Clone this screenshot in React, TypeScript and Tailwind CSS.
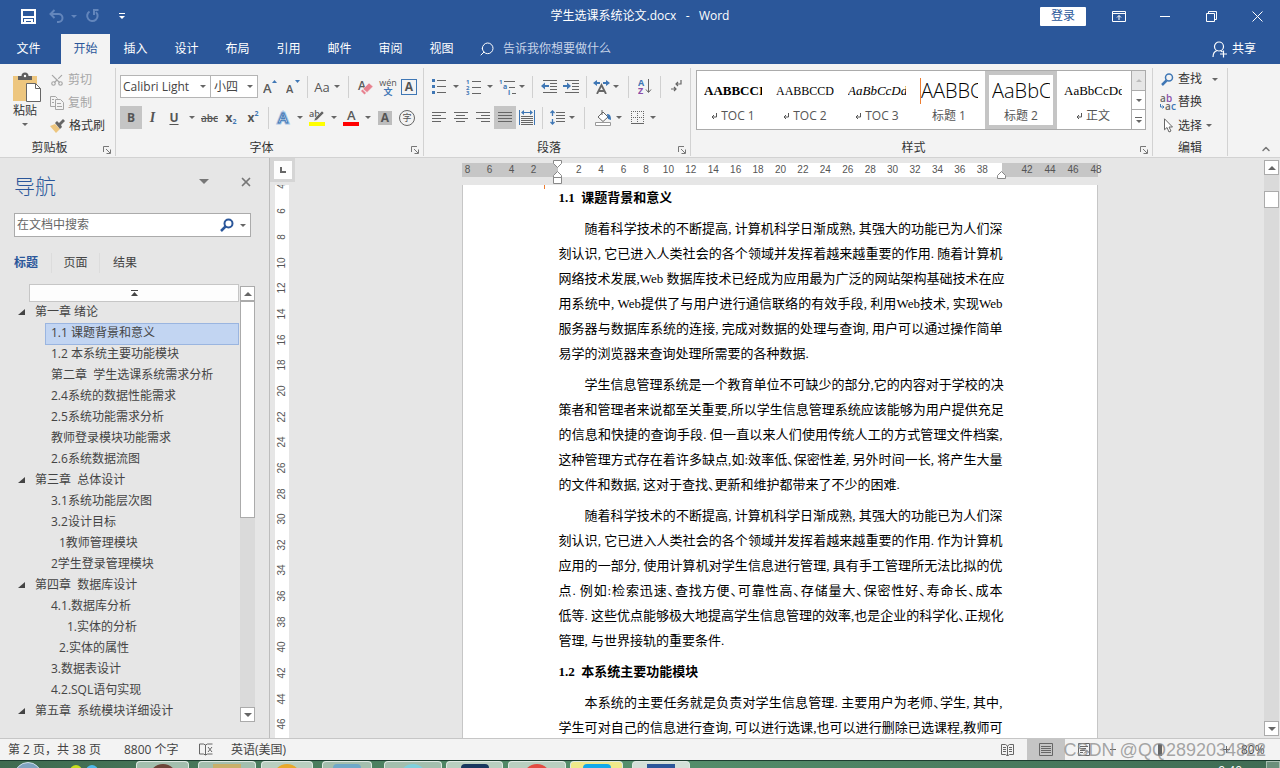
import React from 'react';
import { Search, Scissors, ChevronUp, X } from 'lucide-react';

const BLUE = '#3f77b5';
const GRAY = '#666';

interface BoxProps {
  w: string;
  label?: string;
  className?: string;
  children?: React.ReactNode;
}

const Tool: React.FC<BoxProps> = ({ w, label, className = '', children }) => (
  <button
    type="button"
    aria-label={label}
    className={`flex h-[23px] shrink-0 items-center justify-center whitespace-nowrap text-[#555] ${w} ${className}`}
  >
    {children}
  </button>
);

const Caret: React.FC<{ className?: string; fill?: string }> = ({ className = '', fill = '#666' }) => (
  <svg width="6" height="3" viewBox="0 0 6 3" className={`shrink-0 ${className}`}>
    <path d="M0 0h6L3 3z" fill={fill} />
  </svg>
);

const ScrollArrow: React.FC<{ down?: boolean }> = ({ down }) => (
  <svg width="8" height="4" viewBox="0 0 8 4">
    <path d={down ? 'M0 0h8L4 4z' : 'M0 4h8L4 0z'} fill="#666" />
  </svg>
);

const Sep: React.FC<{ w: string }> = ({ w }) => (
  <div className={`flex shrink-0 justify-center ${w}`}>
    <div className="h-[22px] w-px bg-[#d0d0d0]" />
  </div>
);

// horizontal strokes used by the list and alignment icons
const Lines: React.FC<{ rows: number[][]; color?: string }> = ({ rows, color = GRAY }) => (
  <>
    {rows.map(([x, y, w]) => (
      <rect key={`${x}-${y}`} x={x} y={y} width={w} height="1" fill={color} />
    ))}
  </>
);

const Group: React.FC<{ name: string; w: string; launcher?: boolean; children: React.ReactNode }> = ({
  name,
  w,
  launcher = true,
  children,
}) => (
  <section className={`my-1 flex shrink-0 flex-col border-r border-[#d2d2d2] ${w}`} aria-label={name}>
    <div className="h-[70px]">{children}</div>
    <div className="flex h-[18px] items-center pt-[2px]">
      <span className={`flex-1 text-center text-[#333] ${launcher ? 'pr-1' : ''}`}>{name}</span>
      {launcher && (
        <button type="button" aria-label={`${name}设置`} className="w-3 pt-1">
          <svg width="8" height="8" viewBox="0 0 8 8" fill="none" stroke="#777">
            <path d="M.5 6V.5H6M3 3l4 4M7.500 3.500v4h-4" />
          </svg>
        </button>
      )}
    </div>
  </section>
);

const TitleBar: React.FC = () => (
  <div className="flex h-8 items-center text-white">
    <div className="flex flex-1 items-center">
      <button type="button" aria-label="保存" className="ml-[21px] w-7">
        <svg width="15" height="15" viewBox="0 0 15 15" fill="none" stroke="#fff" strokeWidth="2">
          <path d="M1 1h13v13H1zM2 8h11" />
          <path d="M4 14v-3h7v3" />
        </svg>
      </button>
      <button type="button" aria-label="撤消" className="flex w-9 items-center gap-[7px]">
        <svg width="15" height="14" viewBox="0 0 15 14" fill="none" stroke="#6386bc" strokeWidth="2">
          <path d="M5.500 1L1.500 5l4 4M2 5h7.500a4 4 0 010 8H8" />
        </svg>
        <Caret fill="#6386bc" />
      </button>
      <button type="button" aria-label="恢复" className="w-[34px]">
        <svg width="15" height="14" viewBox="0 0 15 14" fill="none" stroke="#6386bc" strokeWidth="2">
          <path d="M4.500 2.500a5.200 5.200 0 106.500.6M8 1h5.500M9 0v6" />
        </svg>
      </button>
      <button type="button" aria-label="自定义快速访问工具栏" className="flex flex-col items-center gap-[2px]">
        <span className="h-px w-[6px] bg-white" />
        <Caret fill="#fff" />
      </button>
    </div>
    <h1 className="whitespace-pre text-[12px]">学生选课系统论文.docx   -   Word</h1>
    <div className="flex flex-1 items-center justify-end">
      <button type="button" className="mr-[10px] h-[19px] w-[46px] rounded-[1px] bg-white text-[#2b579a]">
        登录
      </button>
      <button type="button" aria-label="功能区显示选项" className="flex w-[46px] justify-center">
        <svg width="14" height="11" viewBox="0 0 14 11" fill="none" stroke="#fff">
          <path d="M.5.5h13v10H.5zM.5 2.500h13M7 9V4.500M5 6.500l2-2 2 2" />
        </svg>
      </button>
      <button type="button" aria-label="最小化" className="flex w-[46px] items-center justify-center">
        <span className="h-px w-[10px] bg-white" />
      </button>
      <button type="button" aria-label="还原" className="flex w-[46px] justify-center">
        <svg width="11" height="11" viewBox="0 0 11 11" fill="none" stroke="#fff">
          <path d="M.5 2.500h8v8h-8zM2.500 2.500v-2h8v8h-2" />
        </svg>
      </button>
      <button type="button" aria-label="关闭" className="flex w-[46px] justify-center">
        <svg width="11" height="11" viewBox="0 0 11 11" fill="none" stroke="#fff">
          <path d="M.5.5l10 10M10.500.5l-10 10" />
        </svg>
      </button>
    </div>
  </div>
);

const TABS = ['插入', '设计', '布局', '引用', '邮件', '审阅', '视图'];

const TabBar: React.FC = () => (
  <nav className="flex h-8 items-end text-white">
    <button type="button" className="h-[30px] w-[61px] pr-1 text-center">
      文件
    </button>
    <button type="button" className="h-[30px] w-[49px] bg-[#f3f3f3] text-[#2b579a]">
      开始
    </button>
    {TABS.map((tab) => (
      <button key={tab} type="button" className="h-[30px] w-[51px]">
        {tab}
      </button>
    ))}
    <label className="ml-3 flex h-[30px] items-center gap-2">
      <Search size={16} strokeWidth={1.500} className="-scale-x-100" />
      <input
        className="w-40 bg-transparent text-[12px] outline-none placeholder:text-[#c8d4e8]"
        placeholder="告诉我你想要做什么"
      />
    </label>
    <button type="button" className="ml-auto mr-6 flex h-[30px] items-center gap-1">
      <svg width="16" height="17" viewBox="0 0 16 17" fill="none" stroke="#fff" strokeWidth="1.200">
        <circle cx="7" cy="5.500" r="4.500" />
        <path d="M1 16c0-4 2-6 4.500-6.500M8.500 9.500l2 1.500M8 13h7M11.500 9.500v7" />
      </svg>
      共享
    </button>
  </nav>
);

const ClipboardGroup: React.FC = () => (
  <Group name="剪贴板" w="w-[116px]">
    <div className="flex">
      <button type="button" className="flex w-[50px] flex-col items-center pt-1">
        <svg width="30" height="31" viewBox="0 0 30 31" className="ml-1">
          <path d="M1 4h24v25H1z" fill="#edc67f" />
          <path d="M6 4h3.500a3.500 3.500 0 017 0H20v4H6z" fill="#5f5f5f" />
          <circle cx="13" cy="4" r="1.200" fill="#fff" />
          <path d="M14.500 11.500h9l5 5v13h-14z" fill="#fff" stroke="#666" />
          <path d="M23.500 11.500v5h5" fill="none" stroke="#666" />
        </svg>
        <span className="leading-4 text-[#333]">粘贴</span>
        <Caret className="mt-1" />
      </button>
      <div className="flex flex-col text-[#a6a6a6]">
        <button type="button" className="flex h-[23px] items-center gap-1">
          <Scissors size={14} className="-rotate-90" />
          剪切
        </button>
        <button type="button" className="flex h-[23px] items-center gap-1">
          <svg width="14" height="14" viewBox="0 0 14 14" fill="none" stroke="#a6a6a6">
            <path d="M5 10.500H.5V.5h5l2 2M5.500 3.500h5l3 3v7h-8zM2 3.500h2M2 6.500h2M7 7.500h4M7 10.500h5" />
          </svg>
          复制
        </button>
        <button type="button" className="flex h-[23px] items-center gap-1 text-[#333]">
          <svg width="15" height="14" viewBox="0 0 15 14">
            <path d="M0 7l5-2 5 5-4 4z" fill="#edc67f" />
            <path d="M5 4l2-2 2 2 4-4 2 2-4 4 1 2-2 2z" fill="#666" />
          </svg>
          格式刷
        </button>
      </div>
    </div>
  </Group>
);

const FontGroup: React.FC = () => (
  <Group name="字体" w="w-[308px]">
    <div className="flex items-center pl-1 pt-[7px]">
      <div className="grid h-[23px] w-[91px] items-center border border-[#b5b5b5] bg-white">
        <select aria-label="字体" className="col-start-1 row-start-1 appearance-none bg-transparent pl-[2px] text-[12px] text-[#444]">
          <option>Calibri Light</option>
        </select>
        <Caret className="col-start-1 row-start-1 mr-1 justify-self-end" />
      </div>
      <div className="grid h-[23px] w-[47px] items-center border border-l-0 border-[#b5b5b5] bg-white">
        <select aria-label="字号" className="col-start-1 row-start-1 appearance-none bg-transparent pl-[3px] text-[12px] text-[#444]">
          <option>小四</option>
        </select>
        <Caret className="col-start-1 row-start-1 mr-1 justify-self-end" />
      </div>
      <Tool w="w-6" label="增大字号">
        <svg width="14" height="16" viewBox="0 0 14 16">
          <text x="0" y="14" fontSize="13" fontWeight="600" fill="#5a5a5a">A</text>
          <path d="M9 4h5l-2.500-3z" fill={BLUE} />
        </svg>
      </Tool>
      <Tool w="w-[22px]" label="减小字号">
        <svg width="14" height="16" viewBox="0 0 14 16">
          <text x="0" y="14" fontSize="11" fontWeight="600" fill="#5a5a5a">A</text>
          <path d="M9 1h5l-2.500 3z" fill={BLUE} />
        </svg>
      </Tool>
      <Sep w="w-[6px]" />
      <Tool w="w-[34px]" label="更改大小写" className="gap-1 text-[13px]">
        Aa <Caret />
      </Tool>
      <Sep w="w-2" />
      <Tool w="w-[26px]" label="清除所有格式">
        <svg width="16" height="16" viewBox="0 0 16 16">
          <text x="1" y="11" fontSize="12" fontWeight="600" fill="#5a5a5a">A</text>
          <path d="M6 10l6-6 4 3.500-6 6z" fill="#e8818f" stroke="#f3f3f3" strokeWidth=".5" />
          <path d="M4 12l1.500-1.500L9 14 7.500 15.500z" fill="#e8818f" />
        </svg>
      </Tool>
      <Tool w="w-5" label="拼音指南" className="flex-col">
        <span className="text-[9px] leading-[9px]">wén</span>
        <span className="text-[9px] font-bold leading-[9px] text-[#3f77b5]">文</span>
      </Tool>
      <Tool w="w-[22px]" label="字符边框">
        <span className="h-4 w-4 border border-[#3f77b5] text-[12px] font-bold leading-[14px]">A</span>
      </Tool>
    </div>
    <div className="flex items-center pl-1 pt-2">
      <Tool w="w-[22px]" className="bg-[#c5c5c5] text-[12px] font-bold">B</Tool>
      <Tool w="w-[21px]" className="font-['Liberation_Serif'] text-[14px] font-bold italic">I</Tool>
      <Tool w="w-[22px]" className="text-[12px] font-bold underline underline-offset-2">U</Tool>
      <Tool w="w-[14px]" label="下划线选项"><Caret /></Tool>
      <Tool w="w-[21px]" className="text-[10px] font-semibold line-through">abc</Tool>
      <Tool w="w-[22px]" label="下标" className="font-bold">
        x<span className="mt-2 text-[7px] text-[#3f77b5]">2</span>
      </Tool>
      <Tool w="w-[22px]" label="上标" className="font-bold">
        x<span className="mb-2 text-[7px] text-[#3f77b5]">2</span>
      </Tool>
      <Sep w="w-2" />
      <Tool w="w-[22px]" label="文本效果">
        <svg width="16" height="16" viewBox="0 0 16 16">
          <text x="3" y="13" fontSize="15" fontWeight="600" fill="#fff" stroke="#a9c6e6" strokeWidth="3">A</text>
          <text x="3" y="13" fontSize="15" fontWeight="600" fill="#fff" stroke={BLUE}>A</text>
        </svg>
      </Tool>
      <Tool w="w-3" label="文本效果选项"><Caret /></Tool>
      <Tool w="w-[22px]" label="突出显示">
        <svg width="16" height="17" viewBox="0 0 16 17">
          <text x="0" y="8" fontSize="9" fontWeight="600" fill="#5a5a5a">ab</text>
          <path d="M5 12l1-3 7-7 2 2-7 7z" fill="#666" stroke="#f3f3f3" strokeWidth=".5" />
          <path d="M0 13h16v4H0z" fill="#ff0" />
        </svg>
      </Tool>
      <Tool w="w-3" label="突出显示颜色"><Caret /></Tool>
      <Tool w="w-[22px]" label="字体颜色">
        <svg width="16" height="17" viewBox="0 0 16 17">
          <text x="4" y="11" fontSize="13" fontWeight="600" fill="#5a5a5a">A</text>
          <path d="M0 13h16v4H0z" fill="#f00" />
        </svg>
      </Tool>
      <Tool w="w-3" label="字体颜色选项"><Caret /></Tool>
      <Tool w="w-[22px]" label="字符底纹">
        <span className="h-[14px] w-[14px] bg-[#bdbdbd] text-[12px] font-bold leading-[14px]">A</span>
      </Tool>
      <Tool w="w-[22px]" label="带圈字符">
        <span className="h-4 w-4 rounded-full border border-[#666] text-[9px] leading-[14px]">字</span>
      </Tool>
    </div>
  </Group>
);

const ParagraphGroup: React.FC = () => (
  <Group name="段落" w="w-[267px]">
    <div className="flex items-center pl-1 pt-[7px]">
      <Tool w="w-[22px]" label="项目符号">
        <svg width="14" height="15" viewBox="0 0 14 15">
          <path d="M0 0h3v3H0zM0 6h3v3H0zM0 12h3v3H0z" fill={BLUE} />
          <Lines rows={[[5, 1, 9], [5, 7, 9], [5, 13, 9]]} />
        </svg>
      </Tool>
      <Tool w="w-3" label="项目符号库"><Caret /></Tool>
      <Tool w="w-[22px]" label="编号">
        <svg width="15" height="16" viewBox="0 0 15 16">
          <text x="0" y="5" fontSize="6" fontWeight="700" fill={BLUE}>1</text>
          <text x="0" y="11" fontSize="6" fontWeight="700" fill={BLUE}>2</text>
          <text x="0" y="16" fontSize="6" fontWeight="700" fill={BLUE}>3</text>
          <Lines rows={[[6, 2, 9], [6, 8, 9], [6, 14, 9]]} />
        </svg>
      </Tool>
      <Tool w="w-3" label="编号库"><Caret /></Tool>
      <Tool w="w-[22px]" label="多级列表">
        <svg width="17" height="16" viewBox="0 0 17 16">
          <text x="0" y="5" fontSize="6" fontWeight="700" fill={BLUE}>1</text>
          <text x="4" y="10" fontSize="7" fontWeight="700" fill={BLUE}>a</text>
          <text x="9" y="16" fontSize="7" fontWeight="700" fill={BLUE}>i</text>
          <Lines rows={[[5, 2, 11], [10, 8, 6], [13, 14, 4]]} />
        </svg>
      </Tool>
      <Tool w="w-2" label="列表库"><Caret /></Tool>
      <Sep w="w-3" />
      {['减少缩进量', '增加缩进量'].map((label, i) => (
        <Tool key={label} w="w-[22px]" label={label}>
          <svg width="16" height="13" viewBox="0 0 16 13">
            <Lines rows={[[2, 0, 14], [9, 3, 7], [9, 6, 7], [9, 9, 7], [2, 12, 14]]} />
            <path d={i === 0 ? 'M0 6l4-3.500v2.500h4v2H4v2.500z' : 'M8 6L4 2.500v2.500H0v2h4v2.500z'} fill={BLUE} />
          </svg>
        </Tool>
      ))}
      <Sep w="w-2" />
      <Tool w="w-[22px]" label="中文版式">
        <svg width="17" height="14" viewBox="0 0 17 14">
          <path d="M0 3l4-3v2h3v2H4v2zM17 3l-4-3v2h-3v2h3v2z" fill={BLUE} />
          <path d="M4 14L8.500 5 13 14M5.500 11h6" fill="none" stroke={GRAY} strokeWidth="1.800" />
        </svg>
      </Tool>
      <Tool w="w-2" label="中文版式选项"><Caret /></Tool>
      <Sep w="w-4" />
      <Tool w="w-[18px]" label="排序">
        <svg width="14" height="17" viewBox="0 0 14 17">
          <text x="0" y="8" fontSize="9" fontWeight="700" fill={BLUE}>A</text>
          <text x="0" y="16" fontSize="9" fontWeight="700" fill="#8c4fa8">Z</text>
          <path d="M10.500 1v13M8 11.500l2.500 3 2.500-3" fill="none" stroke={GRAY} />
        </svg>
      </Tool>
      <Sep w="w-3" />
      <Tool w="w-5" label="显示编辑标记">
        <svg width="11" height="13" viewBox="0 0 11 13" fill="none" stroke={GRAY} strokeWidth="1.200">
          <path d="M10 0v4H5M7 2L5 4l2 2M0 9h5M3 7l2 2-2 2" />
        </svg>
      </Tool>
    </div>
    <div className="flex items-center pl-1 pt-2">
      {[
        { label: '左对齐', x: 0 },
        { label: '居中', x: 2 },
        { label: '右对齐', x: 5 },
      ].map(({ label, x }) => (
        <Tool key={label} w="w-[22px]" label={label}>
          <svg width="14" height="11" viewBox="0 0 14 11">
            <Lines rows={[[0, 0, 14], [x, 3, 9], [0, 6, 14], [x, 9, 9]]} />
          </svg>
        </Tool>
      ))}
      <Tool w="w-[22px]" label="两端对齐" className="bg-[#c5c5c5]">
        <svg width="14" height="11" viewBox="0 0 14 11">
          <Lines rows={[[0, 0, 14], [0, 3, 14], [0, 6, 14], [0, 9, 14]]} />
        </svg>
      </Tool>
      <Tool w="w-[22px]" label="分散对齐">
        <svg width="16" height="15" viewBox="0 0 16 15">
          <path d="M0 0h1v15H0zM15 0h1v15h-1zM2 2.500L5 0v2h6V0l3 2.500L11 5V3H5v2z" fill={BLUE} />
          <Lines rows={[[2, 6, 12], [2, 8, 12], [2, 10, 12], [2, 12, 12], [2, 14, 12]]} />
        </svg>
      </Tool>
      <Sep w="w-2" />
      <Tool w="w-[22px]" label="行和段落间距">
        <svg width="15" height="15" viewBox="0 0 15 15">
          <path d="M2.500 1v5M2.500 9v5M.5 3l2-2 2 2M.5 12l2 2 2-2" fill="none" stroke={BLUE} strokeWidth="1.300" />
          <Lines rows={[[6, 2, 9], [6, 5, 9], [6, 8, 9], [6, 11, 9]]} />
        </svg>
      </Tool>
      <Tool w="w-2" label="间距选项"><Caret /></Tool>
      <Sep w="w-4" />
      <Tool w="w-[22px]" label="底纹">
        <svg width="17" height="16" viewBox="0 0 17 16">
          <path d="M3 7l5-5 5 5-5 4.500zM7 0v5" fill="#fff" stroke={GRAY} />
          <path d="M12 4c3 0 4 2 4 6l-3-1z" fill={BLUE} />
          <path d="M.5 12.500h15v3H.5z" fill="#fff" stroke="#999" />
        </svg>
      </Tool>
      <Tool w="w-[10px]" label="底纹颜色"><Caret /></Tool>
      <Tool w="w-[26px]" label="边框">
        <svg width="13" height="13" viewBox="0 0 13 13" fill="none" stroke={GRAY}>
          <path d="M0 .5h13M0 6.500h13M.5 0v13M6.500 0v13M12.500 0v13" strokeDasharray="1 1" />
          <path d="M0 12.500h13" />
        </svg>
      </Tool>
      <Tool w="w-[6px]" label="边框选项"><Caret /></Tool>
    </div>
  </Group>
);

const STYLES = [
  { name: 'TOC 1', mark: true, sample: 'AABBCCI', cls: "font-['Liberation_Serif'] text-[13px] font-bold" },
  { name: 'TOC 2', mark: true, sample: 'AABBCCDI', cls: "font-['Liberation_Serif'] text-[12px]" },
  { name: 'TOC 3', mark: true, sample: 'AaBbCcDd', cls: "font-['Liberation_Serif'] text-[13px] italic" },
  { name: '标题 1', mark: false, sample: 'AABBC', cls: 'border-l border-[#ed7d31] text-[20px] font-light' },
  { name: '标题 2', mark: false, sample: 'AaBbCc', cls: 'text-[20px] font-light' },
  { name: '正文', mark: true, sample: 'AaBbCcDd', cls: "font-['Liberation_Serif'] text-[13px]" },
];

const StylesGroup: React.FC = () => (
  <Group name="样式" w="w-[462px]">
    <div className="flex pl-[5px] pt-[2px]">
      <div className="flex h-[60px] w-[450px] border border-[#ababab] bg-white">
        {STYLES.map((style) => (
          <button
            key={style.name}
            type="button"
            className={`flex w-[72px] shrink-0 flex-col items-center border-4 ${
              style.name === '标题 2' ? 'border-[#c5c5c5]' : 'border-transparent'
            }`}
          >
            <span className={`mt-[3px] h-[26px] w-[58px] overflow-hidden whitespace-nowrap text-left leading-[26px] text-black ${style.cls}`}>
              {style.sample}
            </span>
            <span className="flex h-[21px] items-center gap-1 pt-[3px] text-[#555]">
              {style.mark && (
                <svg width="6" height="6" viewBox="0 0 6 6" fill="none" stroke="#555">
                  <path d="M5.500 0v4H1M3 2L1 4l2 2" />
                </svg>
              )}
              {style.name}
            </span>
          </button>
        ))}
        <div className="ml-auto flex w-[14px] flex-col divide-y divide-[#ababab] border-l border-[#ababab]">
          <button type="button" aria-label="上一行" className="flex flex-1 items-center justify-center bg-[#e6e6e6]">
            <svg width="6" height="3" viewBox="0 0 6 3"><path d="M0 3h6L3 0z" fill="#bbb" /></svg>
          </button>
          <button type="button" aria-label="下一行" className="flex flex-1 items-center justify-center">
            <Caret />
          </button>
          <button type="button" aria-label="其他" className="flex flex-1 flex-col items-center justify-center gap-[2px]">
            <span className="h-px w-[7px] bg-[#666]" />
            <Caret />
          </button>
        </div>
      </div>
    </div>
  </Group>
);

const EditGroup: React.FC = () => (
  <Group name="编辑" w="w-[75px]" launcher={false}>
    <div className="flex flex-col pl-[7px] text-[#333]">
      <button type="button" className="flex h-[22px] items-center">
        <svg width="18" height="13" viewBox="0 0 18 13" fill="none" stroke={BLUE}>
          <circle cx="9" cy="4.500" r="3.500" strokeWidth="1.500" />
          <path d="M6.500 7.500L2 12" strokeWidth="2.500" />
        </svg>
        查找 <Caret className="ml-[10px]" />
      </button>
      <button type="button" className="flex h-6 items-center">
        <svg width="18" height="17" viewBox="0 0 18 17" fontSize="10" fontWeight="600">
          <text x="0" y="8" fill="#666">a</text>
          <text x="6" y="8" fill="#8c4fa8">b</text>
          <text x="5" y="16" fill="#666">a</text>
          <text x="11" y="16" fill={BLUE}>c</text>
          <path d="M.5 10v3h3M2.500 11.500L4 13l-1.500 1.500" fill="none" stroke={BLUE} />
        </svg>
        替换
      </button>
      <button type="button" className="flex h-[23px] items-center">
        <svg width="18" height="15" viewBox="0 0 18 15" fill="#fff" stroke="#666">
          <path d="M4.500.8v11l2.500-2.300 2 4.500 2-1-2-4h3.500z" />
        </svg>
        选择 <Caret className="ml-1" />
      </button>
    </div>
  </Group>
);

interface Heading {
  text: string;
  pad: string;
  open?: boolean;
  active?: boolean;
}

const HEADINGS: Heading[] = [
  { text: '第一章 绪论', pad: 'ml-[2px]', open: true },
  { text: '1.1 课题背景和意义', pad: 'ml-[18px]', active: true },
  { text: '1.2 本系统主要功能模块', pad: 'ml-[18px]' },
  { text: '第二章  学生选课系统需求分析', pad: 'ml-[18px]' },
  { text: '2.4系统的数据性能需求', pad: 'ml-[18px]' },
  { text: '2.5系统功能需求分析', pad: 'ml-[18px]' },
  { text: '教师登录模块功能需求', pad: 'ml-[18px]' },
  { text: '2.6系统数据流图', pad: 'ml-[18px]' },
  { text: '第三章  总体设计', pad: 'ml-[2px]', open: true },
  { text: '3.1系统功能层次图', pad: 'ml-[18px]' },
  { text: '3.2设计目标', pad: 'ml-[18px]' },
  { text: '1教师管理模块', pad: 'ml-[26px]' },
  { text: '2学生登录管理模块', pad: 'ml-[18px]' },
  { text: '第四章  数据库设计', pad: 'ml-[2px]', open: true },
  { text: '4.1.数据库分析', pad: 'ml-[18px]' },
  { text: '1.实体的分析', pad: 'ml-[34px]' },
  { text: '2.实体的属性', pad: 'ml-[26px]' },
  { text: '3.数据表设计', pad: 'ml-[18px]' },
  { text: '4.2.SQL语句实现', pad: 'ml-[18px]' },
  { text: '第五章  系统模块详细设计', pad: 'ml-[2px]', open: true },
];

const NavPane: React.FC = () => (
  <aside className="flex w-[270px] shrink-0 flex-col border-r border-[#bdbdbd] pb-4 pl-[14px] text-[#444]">
    <div className="flex h-[55px] shrink-0 items-center pr-4">
      <h2 className="flex-1 text-[21px] font-light text-[#2b579a]">导航</h2>
      <button type="button" aria-label="任务窗格选项" className="mb-2 mr-[30px]">
        <svg width="10" height="5" viewBox="0 0 10 5"><path d="M0 0h10L5 5z" fill="#777" /></svg>
      </button>
      <button type="button" aria-label="关闭导航" className="mb-2">
        <X size={14} strokeWidth={3} color="#777" />
      </button>
    </div>
    <label className="flex h-6 w-[237px] shrink-0 items-center border border-[#ababab] bg-white pl-[2px] pr-1">
      <input
        aria-label="在文档中搜索"
        placeholder="在文档中搜索"
        className="min-w-0 flex-1 text-[12px] outline-none placeholder:text-[#666]"
      />
      <svg width="14" height="14" viewBox="0 0 14 14" fill="none" stroke="#2b579a" strokeWidth="2" className="mr-[6px]">
        <circle cx="8.500" cy="5.500" r="4" />
        <path d="M5.500 8.500L1 13" strokeWidth="2.500" />
      </svg>
      <Caret />
    </label>
    <div className="flex h-[47px] shrink-0 items-center pt-1">
      <button type="button" className="w-[37px] text-left font-bold text-[#2b579a]">标题</button>
      <button type="button" className="h-5 w-[49px] border-x border-[#dcdcdc]">页面</button>
      <button type="button" className="w-[50px]">结果</button>
    </div>
    <div className="flex min-h-0 flex-1">
      <div className="w-[226px] overflow-hidden">
        <button type="button" aria-label="跳转到开头" className="ml-[15px] flex h-[18px] w-[210px] items-center justify-center border border-[#c6c6c6] bg-[#fdfdfd]">
          <svg width="7" height="6" viewBox="0 0 7 6"><path d="M0 0h7v1H0zM0 6h7L3.500 2z" fill="#444" /></svg>
        </button>
        <ul className="pr-px">
          {HEADINGS.map((h) => (
            <li key={h.text} className="flex h-[21px] items-center">
              <span className="w-[13px] shrink-0 pl-1">
                {h.open && (
                  <svg width="7" height="7" viewBox="0 0 7 7"><path d="M7 0v6H0z" fill="#444" /></svg>
                )}
              </span>
              <a
                href="#doc"
                className={`flex h-[22px] flex-1 items-center whitespace-pre border pb-px pl-[5px] ${h.pad} ${
                  h.active ? 'border-[#9ab5e0] bg-[#c2d5f2]' : 'border-transparent'
                }`}
              >
                {h.text}
              </a>
            </li>
          ))}
        </ul>
      </div>
      <div className="mt-[2px] flex w-[15px] flex-col bg-[#dadada]">
        <button type="button" aria-label="向上滚动" className="flex h-[15px] items-center justify-center border border-[#ababab] bg-white">
          <ScrollArrow />
        </button>
        <div className="h-[217px] border border-[#ababab] bg-white" />
        <button type="button" aria-label="向下滚动" className="mt-auto flex h-[15px] items-center justify-center border border-[#ababab] bg-white">
          <ScrollArrow down />
        </button>
      </div>
    </div>
  </aside>
);

const even = (from: number, to: number) =>
  Array.from({ length: (to - from) / 2 + 1 }, (_, i) => from + i * 2);

const HRuler: React.FC = () => (
  <div className="relative mx-auto mt-[5px] flex h-[14px] w-[636px] shrink-0 bg-white text-center font-['Liberation_Sans'] text-[10px] leading-[14px] text-[#555]">
    <div className="flex w-24 shrink-0 justify-end bg-[#c6c6c6] pr-[13px]">
      {[8, 6, 4, 2].map((n) => (
        <span key={n} className="w-[22px] shrink-0">{n}</span>
      ))}
    </div>
    <div className="flex w-[444px] shrink-0 pl-[10px] pr-2">
      {even(2, 38).map((n) => (
        <span key={n} className="flex-1 basis-0">{n}</span>
      ))}
    </div>
    <div className="flex w-24 shrink-0 bg-[#c6c6c6] pl-[14px]">
      {[42, 44, 46, 48].map((n) => (
        <span key={n} className="w-[23px] shrink-0">{n}</span>
      ))}
    </div>
    <svg width="9" height="26" viewBox="0 0 9 26" className="absolute -top-1 left-[91px]" fill="#fff" stroke="#888">
      <path d="M.5 1.500h8v3l-4 4-4-4zM4.500 12.500l4 4v2h-8v-2zM.5 18.500h8v6h-8z" />
    </svg>
    <svg width="9" height="9" viewBox="0 0 9 9" className="absolute left-[535px] top-2" fill="#fff" stroke="#888">
      <path d="M4.500.5l4 4v3h-8v-3z" />
    </svg>
  </div>
);

const VRuler: React.FC = () => (
  <div className="flex w-[25px] shrink-0 flex-col items-center">
    <div className="h-6 w-full shrink-0 bg-[#d5d5d5] p-1 pt-[3px]">
      <button type="button" aria-label="左对齐制表符" className="flex h-[18px] w-[18px] items-center justify-center bg-[#fdfdfd]">
        <svg width="6" height="6" viewBox="0 0 6 6"><path d="M0 0h2v4h4v2H0z" fill="#666" /></svg>
      </button>
    </div>
    <div className="mr-[2px] mt-[3px] min-h-0 w-[14px] flex-1 overflow-hidden bg-white">
      <div className="-mt-3 flex h-[564px] flex-col font-['Liberation_Sans'] text-[10px] leading-none text-[#555]">
        {even(4, 46).map((n) => (
          <span key={n} className="flex flex-1 basis-0 items-center justify-center">
            <span className="-rotate-90">{n}</span>
          </span>
        ))}
      </div>
    </div>
  </div>
);

interface Block {
  title?: string;
  lines?: string[];
}

const BLOCKS: Block[] = [
  { title: '1.1  课题背景和意义' },
  {
    lines: [
      '随着科学技术的不断提高, 计算机科学日渐成熟, 其强大的功能已为人们深',
      '刻认识, 它已进入人类社会的各个领域并发挥着越来越重要的作用. 随着计算机',
      '网络技术发展,Web 数据库技术已经成为应用最为广泛的网站架构基础技术在应',
      '用系统中, Web提供了与用户进行通信联络的有效手段, 利用Web技术, 实现Web',
      '服务器与数据库系统的连接, 完成对数据的处理与查询, 用户可以通过操作简单',
      '易学的浏览器来查询处理所需要的各种数据.',
    ],
  },
  {
    lines: [
      '学生信息管理系统是一个教育单位不可缺少的部分,它的内容对于学校的决',
      '策者和管理者来说都至关重要,所以学生信息管理系统应该能够为用户提供充足',
      '的信息和快捷的查询手段. 但一直以来人们使用传统人工的方式管理文件档案,',
      '这种管理方式存在着许多缺点,如:效率低、保密性差, 另外时间一长, 将产生大量',
      '的文件和数据, 这对于查找、更新和维护都带来了不少的困难.',
    ],
  },
  {
    lines: [
      '随着科学技术的不断提高, 计算机科学日渐成熟, 其强大的功能已为人们深',
      '刻认识, 它已进入人类社会的各个领域并发挥着越来越重要的作用. 作为计算机',
      '应用的一部分, 使用计算机对学生信息进行管理, 具有手工管理所无法比拟的优',
      '点. 例如:检索迅速、查找方便、可靠性高、存储量大、保密性好、寿命长、成本',
      '低等. 这些优点能够极大地提高学生信息管理的效率,也是企业的科学化、正规化',
      '管理, 与世界接轨的重要条件.',
    ],
  },
  { title: '1.2  本系统主要功能模块' },
  {
    lines: [
      '本系统的主要任务就是负责对学生信息管理. 主要用户为老师、学生, 其中,',
      '学生可对自己的信息进行查询, 可以进行选课,也可以进行删除已选课程,教师可',
      '以对学生的成绩进行管理.',
    ],
  },
];

const Page: React.FC = () => (
  <article
    id="doc"
    className="relative mx-auto mt-2 min-h-0 w-[636px] flex-1 overflow-hidden border-x border-[#c6c6c6] bg-white pl-24 pr-[94px] font-['Liberation_Serif','Noto_Sans_CJK_SC',serif] text-[13px] text-black [font-feature-settings:'halt']"
  >
    <span className="absolute left-[81px] top-0 h-1 w-px bg-[#ed7d31]" />
    {BLOCKS.map((block, b) =>
      block.title ? (
        <h3 key={b} className="mb-[6px] h-[25px] whitespace-pre font-bold leading-[25px]">
          {block.title}
        </h3>
      ) : (
        <div key={b} className="mb-[6px]">
          {block.lines!.map((line, i) => (
            <p
              key={i}
              className={`h-[25px] whitespace-nowrap leading-[25px] ${i === 0 ? 'pl-[26px]' : ''} ${
                i < block.lines!.length - 1 ? '[text-align-last:justify]' : ''
              }`}
            >
              {line}
            </p>
          ))}
        </div>
      ),
    )}
  </article>
);

const StatusBar: React.FC = () => (
  <footer className="relative flex h-[22px] shrink-0 items-center border-t border-[#c6c6c6] bg-[#f3f3f3] pl-2 text-[#444]">
    <span className="w-[116px]">第 2 页，共 38 页</span>
    <span className="w-[75px]">8800 个字</span>
    <button type="button" aria-label="校对" className="w-8">
      <svg width="15" height="13" viewBox="0 0 15 13" fill="none" stroke="#666">
        <path d="M6.500 2v10l-2-1H.5V1h4l2 1 2-1h5M6.500 12l2-1h5M9 4l4 5M13 4L9 9" />
      </svg>
    </button>
    <span>英语(美国)</span>
    <div className="ml-auto flex h-full items-center pr-[15px]">
      <button type="button" aria-label="阅读视图" className="flex w-[39px] justify-center">
        <svg width="13" height="12" viewBox="0 0 13 12" fill="none" stroke="#666">
          <path d="M6.500 2v10l-2-1.500h-4V.5h4l2 1.500 2-1.500h4v10h-4l-2 1.500M2 3.500h3M2 5.500h3M2 7.500h3M8 3.500h3M8 5.500h3M8 7.500h3" />
        </svg>
      </button>
      <button type="button" aria-label="页面视图" className="flex h-full w-[38px] items-center justify-center bg-[#c5c5c5]">
        <svg width="14" height="13" viewBox="0 0 14 13" fill="none" stroke="#666">
          <path d="M.5.5h13v12H.5zM2 3.500h10M2 5.500h10M2 7.500h10M2 9.500h10" />
        </svg>
      </button>
      <button type="button" aria-label="Web 版式视图" className="flex w-[45px] justify-center pr-2">
        <svg width="12" height="13" viewBox="0 0 12 13" fill="none" stroke="#666">
          <path d="M.5.5h11v12H.5zM2 3.500h8M2 5.500h6M2 7.500h5M2 9.500h3M6 10.500l3-3 3 3" />
        </svg>
      </button>
      <button type="button" aria-label="缩小" className="w-4">
        <svg width="6" height="1" viewBox="0 0 6 1"><path d="M0 0h6v1H0z" fill="#666" /></svg>
      </button>
      <input
        type="range"
        aria-label="显示比例"
        min="0"
        max="100"
        defaultValue="34"
        className="h-3 w-[97px] appearance-none bg-transparent [&::-webkit-slider-thumb]:h-3 [&::-webkit-slider-thumb]:w-1 [&::-webkit-slider-thumb]:appearance-none [&::-webkit-slider-thumb]:bg-[#666]"
      />
      <button type="button" aria-label="放大" className="w-[18px]">
        <svg width="7" height="7" viewBox="0 0 7 7"><path d="M3 0h1v3h3v1H4v3H3V4H0V3h3z" fill="#666" /></svg>
      </button>
      <span className="w-6">80%</span>
    </div>
    <span className="pointer-events-none absolute right-[14px] top-0 whitespace-nowrap font-['Liberation_Sans'] text-[18px] leading-[22px] text-[#8f8f8f]/80">
      CSDN @QQ2892034822
    </span>
  </footer>
);

const TASKS = [
  { w: 'w-[53px]', gap: 'mr-[9px]', bg: 'bg-[#a3bfae]', icon: 'bg-[#6d4438] rounded-t-full' },
  { w: 'w-[58px]', gap: 'mr-[5px]', bg: 'bg-[#a3bfae]', icon: 'bg-[#c9b06a]' },
  { w: 'w-[52px]', gap: 'mr-[9px]', bg: 'bg-[#b9cfc0]', icon: 'bg-[#e9a92b] rounded-t-full' },
  { w: 'w-[50px]', gap: 'mr-[12px]', bg: 'bg-[#a3bfae]', icon: 'bg-[#6fa9c9] rounded-t' },
  { w: 'w-[58px]', gap: 'mr-[4px]', bg: 'bg-[#a3bfae]', icon: 'bg-[#7fd0dc] rounded-t-full' },
  { w: 'w-[57px]', gap: 'mr-[5px]', bg: 'bg-[#b9cfc0]', icon: 'bg-[#17375e] rounded-t' },
  { w: 'w-[58px]', gap: 'mr-[4px]', bg: 'bg-[#b9cfc0]', icon: 'bg-[#e34b42] rounded-t-full' },
  { w: 'w-[53px]', gap: 'mr-[9px]', bg: 'bg-[#efe98a]', icon: 'bg-[#12a9ea] rounded-t' },
  { w: 'w-[58px]', gap: 'mr-[4px]', bg: 'bg-[#d3e0d8]', icon: 'bg-[#2b579a]' },
];

const Taskbar: React.FC = () => (
  <div className="flex h-2 shrink-0 overflow-hidden border-t border-[#1d3d30] bg-linear-to-r from-[#3f6b50] via-[#55906c] to-[#3f6b53]">
    <div className="flex w-[136px] shrink-0 gap-1 pl-[14px]">
      <span className="mr-6 mt-px h-7 w-7 rounded-full border border-[#cfe0ea] bg-[#7fa3bf]" />
      <span className="mt-1 h-3 w-3 rounded-full bg-[#c6dd1c]" />
      <span className="mt-1 h-3 w-3 rounded-full bg-[#4db9ea]" />
    </div>
    {TASKS.map((t, i) => (
      <button
        key={i}
        type="button"
        aria-label={`任务 ${i + 1}`}
        className={`flex shrink-0 justify-center rounded-t-sm border border-b-0 border-[#dfeae3] ${t.w} ${t.gap} ${t.bg}`}
      >
        <span className={`mt-[2px] h-6 w-7 ${t.icon}`} />
      </button>
    ))}
    <span className="ml-auto mr-6 pt-[2px] text-white">9:40</span>
    <span className="w-[14px] border border-b-0 border-[#a8c0b2] bg-[#6b8f7b]" />
  </div>
);

const App: React.FC = () => {
  return (
    <div className="flex h-screen flex-col overflow-hidden bg-[#e6e6e6] font-['Open_Sans','Noto_Sans_CJK_SC',sans-serif] text-[12px] leading-4">
      <header className="shrink-0 bg-[#2b579a]">
        <TitleBar />
        <TabBar />
      </header>
      <div className="flex h-[94px] shrink-0 items-start border-b border-[#d2d2d2] bg-[#f3f3f3]">
        <ClipboardGroup />
        <FontGroup />
        <ParagraphGroup />
        <StylesGroup />
        <EditGroup />
        <button type="button" aria-label="折叠功能区" className="mb-[2px] ml-auto mr-2 self-end">
          <ChevronUp size={12} strokeWidth={3} color="#777" />
        </button>
      </div>
      <div className="flex min-h-0 flex-1">
        <NavPane />
        <VRuler />
        <main className="flex min-w-0 flex-1 flex-col">
          <HRuler />
          <Page />
        </main>
        <div className="my-[2px] mr-px flex w-[15px] shrink-0 flex-col bg-[#dadada]">
          <button type="button" aria-label="向上滚动" className="flex h-[15px] items-center justify-center border border-[#ababab] bg-white">
            <ScrollArrow />
          </button>
          <div className="mt-4 h-[17px] border border-[#ababab] bg-white" />
          <button type="button" aria-label="向下滚动" className="mt-auto flex h-[15px] items-center justify-center border border-[#ababab] bg-white">
            <ScrollArrow down />
          </button>
        </div>
      </div>
      <StatusBar />
      <Taskbar />
    </div>
  );
};

export default App;
